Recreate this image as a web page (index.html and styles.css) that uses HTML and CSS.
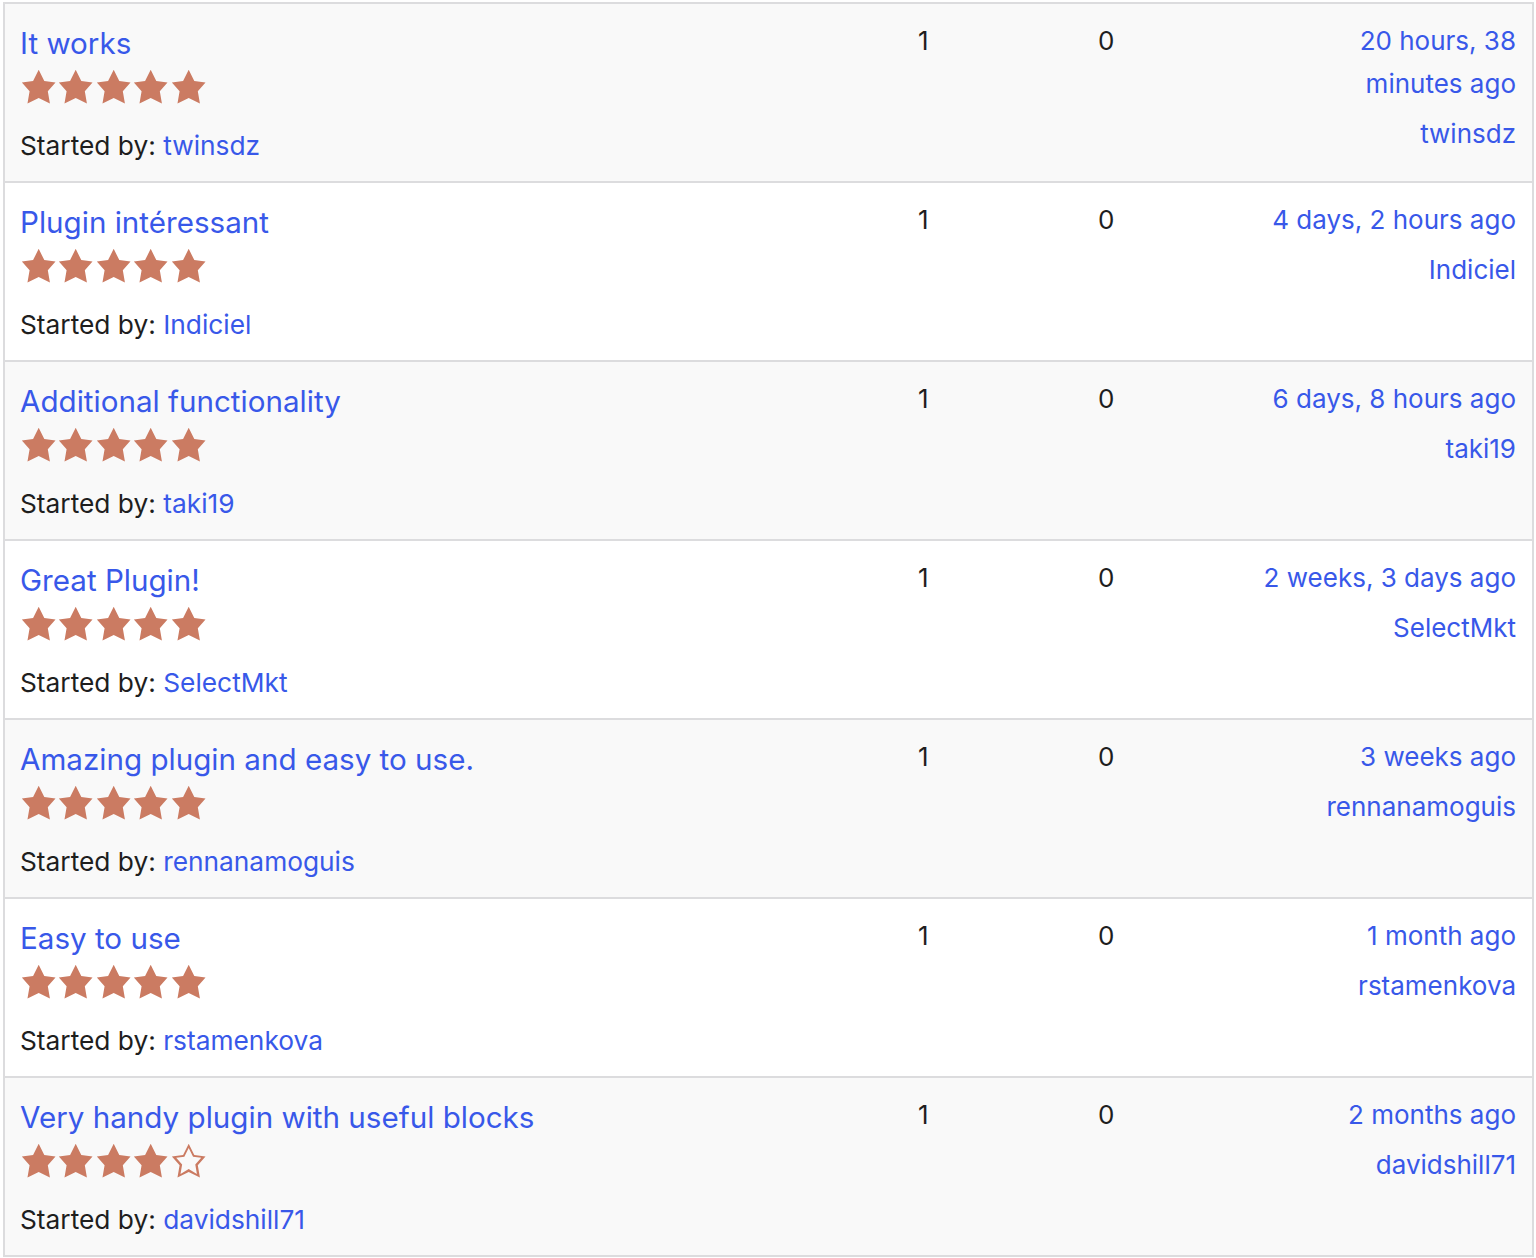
FILE: index.html
```html
<!DOCTYPE html>
<html lang="en">
<head>
  <meta charset="UTF-8" />
  <title>Reviews</title>
  <link rel="stylesheet" href="styles.css">
</head>
<body>
  <svg width="0" height="0" class="defs">
    <symbol id="star-full" viewBox="0 0 20 20">
      <path d="M10 1l3 6 6 .75-4.12 4.62L16 19l-6-3-6 3 1.13-6.63L1 7.75 7 7z"/>
    </symbol>
    <symbol id="star-empty" viewBox="0 0 20 20">
      <path fill-rule="evenodd" d="M10 1L7 7l-6 .75 4.13 4.62L4 19l6-3 6 3-1.13-6.63L19 7.75 13 7zm0 2.24l2.34 4.69 4.36.54-3.18 3.56.87 5.15L10 14.4l-4.38 2.78.87-5.15-3.18-3.56 4.36-.54z"/>
    </symbol>
  </svg>

  <ul class="topics">
    <li class="topic odd">
      <div class="topic-main">
        <a class="topic-title" href="#">It works</a>
        <div class="rating">
          <svg><use href="#star-full"/></svg><svg><use href="#star-full"/></svg><svg><use href="#star-full"/></svg><svg><use href="#star-full"/></svg><svg><use href="#star-full"/></svg>
        </div>
        <p class="started">Started by: <a href="#">twinsdz</a></p>
      </div>
      <div class="stat">1</div>
      <div class="stat">0</div>
      <div class="fresh">
        <a class="when" href="#">20 hours, 38 minutes ago</a>
        <a class="who" href="#">twinsdz</a>
      </div>
    </li>

    <li class="topic">
      <div class="topic-main">
        <a class="topic-title" href="#">Plugin intéressant</a>
        <div class="rating">
          <svg><use href="#star-full"/></svg><svg><use href="#star-full"/></svg><svg><use href="#star-full"/></svg><svg><use href="#star-full"/></svg><svg><use href="#star-full"/></svg>
        </div>
        <p class="started">Started by: <a href="#">Indiciel</a></p>
      </div>
      <div class="stat">1</div>
      <div class="stat">0</div>
      <div class="fresh">
        <a class="when" href="#">4 days, 2 hours ago</a>
        <a class="who" href="#">Indiciel</a>
      </div>
    </li>

    <li class="topic odd">
      <div class="topic-main">
        <a class="topic-title" href="#">Additional functionality</a>
        <div class="rating">
          <svg><use href="#star-full"/></svg><svg><use href="#star-full"/></svg><svg><use href="#star-full"/></svg><svg><use href="#star-full"/></svg><svg><use href="#star-full"/></svg>
        </div>
        <p class="started">Started by: <a href="#">taki19</a></p>
      </div>
      <div class="stat">1</div>
      <div class="stat">0</div>
      <div class="fresh">
        <a class="when" href="#">6 days, 8 hours ago</a>
        <a class="who" href="#">taki19</a>
      </div>
    </li>

    <li class="topic">
      <div class="topic-main">
        <a class="topic-title" href="#">Great Plugin!</a>
        <div class="rating">
          <svg><use href="#star-full"/></svg><svg><use href="#star-full"/></svg><svg><use href="#star-full"/></svg><svg><use href="#star-full"/></svg><svg><use href="#star-full"/></svg>
        </div>
        <p class="started">Started by: <a href="#">SelectMkt</a></p>
      </div>
      <div class="stat">1</div>
      <div class="stat">0</div>
      <div class="fresh">
        <a class="when" href="#">2 weeks, 3 days ago</a>
        <a class="who" href="#">SelectMkt</a>
      </div>
    </li>

    <li class="topic odd">
      <div class="topic-main">
        <a class="topic-title" href="#">Amazing plugin and easy to use.</a>
        <div class="rating">
          <svg><use href="#star-full"/></svg><svg><use href="#star-full"/></svg><svg><use href="#star-full"/></svg><svg><use href="#star-full"/></svg><svg><use href="#star-full"/></svg>
        </div>
        <p class="started">Started by: <a href="#">rennanamoguis</a></p>
      </div>
      <div class="stat">1</div>
      <div class="stat">0</div>
      <div class="fresh">
        <a class="when" href="#">3 weeks ago</a>
        <a class="who" href="#">rennanamoguis</a>
      </div>
    </li>

    <li class="topic">
      <div class="topic-main">
        <a class="topic-title" href="#">Easy to use</a>
        <div class="rating">
          <svg><use href="#star-full"/></svg><svg><use href="#star-full"/></svg><svg><use href="#star-full"/></svg><svg><use href="#star-full"/></svg><svg><use href="#star-full"/></svg>
        </div>
        <p class="started">Started by: <a href="#">rstamenkova</a></p>
      </div>
      <div class="stat">1</div>
      <div class="stat">0</div>
      <div class="fresh">
        <a class="when" href="#">1 month ago</a>
        <a class="who" href="#">rstamenkova</a>
      </div>
    </li>

    <li class="topic odd">
      <div class="topic-main">
        <a class="topic-title" href="#">Very handy plugin with useful blocks</a>
        <div class="rating">
          <svg><use href="#star-full"/></svg><svg><use href="#star-full"/></svg><svg><use href="#star-full"/></svg><svg><use href="#star-full"/></svg><svg class="empty"><use href="#star-empty"/></svg>
        </div>
        <p class="started">Started by: <a href="#">davidshill71</a></p>
      </div>
      <div class="stat">1</div>
      <div class="stat">0</div>
      <div class="fresh">
        <a class="when" href="#">2 months ago</a>
        <a class="who" href="#">davidshill71</a>
      </div>
    </li>
  </ul>
</body>
</html>
```

FILE: styles.css
```css
* {
  box-sizing: border-box;
}

body {
  margin: 0;
  padding: 2px 2px 0 3px;
  font-family: Inter, "Noto Sans", sans-serif;
  font-size: 26px;
  color: #1e1e1e;
  background: #fff;
}

a {
  color: #3858e9;
  text-decoration: none;
}

.defs {
  position: absolute;
}

.topics {
  list-style: none;
  margin: 0;
  padding: 0;
  border: 2px solid #dcdcde;
  border-bottom: none;
}

.topic {
  display: grid;
  grid-template-columns: 1fr 180px 180px 255px;
  height: 179px;
  padding: 0 16px 0 15px;
  border-bottom: 2px solid #dcdcde;
  background: #fff;
}

.topic.odd {
  background: #f9f9f9;
}

.topic-main {
  padding-top: 19px;
}

.topic-title {
  display: block;
  font-size: 29.6px;
  line-height: 40px;
}

.rating {
  display: flex;
  height: 37px;
  margin-top: 5px;
}

.rating svg {
  width: 37.4px;
  height: 37.4px;
  fill: #cb7b62;
}

.started {
  margin: 21px 0 0;
  font-size: 26.3px;
  line-height: 40px;
}

.stat {
  padding: 15px 0 0 17px;
  line-height: 43px;
}

.fresh {
  padding-top: 15px;
  text-align: right;
  line-height: 43px;
}

.fresh a {
  display: block;
}

.fresh .who {
  margin-top: 7px;
}
```
